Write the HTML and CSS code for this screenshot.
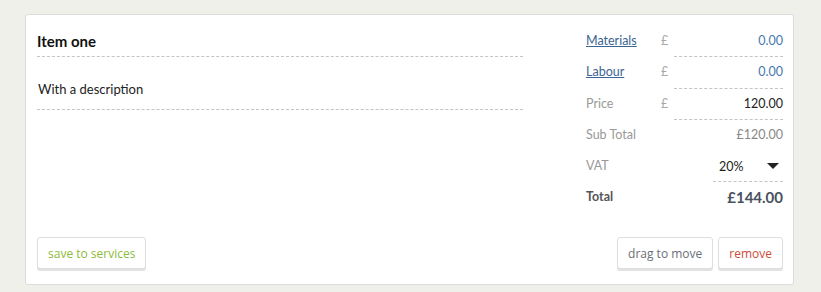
FILE: index.html
```html
<!DOCTYPE html>
<html lang="en">

<head>
  <meta charset="UTF-8" />
  <title>Line item</title>
  <link rel="stylesheet" href="styles.css">
</head>

<body>
  <div class="item">
    <div class="item-body">
      <!-- 左侧：名称和描述 -->
      <div class="details">
        <div class="title">Item one</div>
        <div class="desc">With a description</div>
      </div>
      <!-- 右侧：价格明细 -->
      <div class="costs">
        <div class="row">
          <a class="label link" href="#">Materials</a>
          <span class="cur">£</span>
          <span class="val input blue">0.00</span>
        </div>
        <div class="row">
          <a class="label link" href="#">Labour</a>
          <span class="cur">£</span>
          <span class="val input blue">0.00</span>
        </div>
        <div class="row">
          <span class="label">Price</span>
          <span class="cur">£</span>
          <span class="val input">120.00</span>
        </div>
        <div class="row">
          <span class="label">Sub Total</span>
          <span class="cur"></span>
          <span class="val grey">£120.00</span>
        </div>
        <div class="row">
          <span class="label">VAT</span>
          <span class="cur"></span>
          <span class="vat">
            <span class="vat-box">20%<i class="caret"></i></span>
          </span>
        </div>
        <div class="row">
          <span class="label total">Total</span>
          <span class="cur"></span>
          <span class="val sum">£144.00</span>
        </div>
      </div>
    </div>
    <div class="actions">
      <button class="btn green">save to services</button>
      <div class="right-btns">
        <button class="btn">drag to move</button>
        <button class="btn red">remove</button>
      </div>
    </div>
  </div>
</body>

</html>
```

FILE: styles.css
```css
* {
  margin: 0;
  padding: 0;
  box-sizing: border-box;
}

body {
  background: #f0f0eb;
  font-family: Lato, "Open Sans", sans-serif;
  font-size: 13px;
  color: #222;
}

.item {
  width: 769px;
  height: 271px;
  margin: 14px 0 0 25px;
  background: #fff;
  border: 1px solid #dcdcdc;
  border-radius: 3px;
  padding: 11px 10px 15px 11px;
  display: flex;
  flex-direction: column;
  justify-content: space-between;
}

.item-body {
  display: flex;
  justify-content: space-between;
}

.details {
  width: 486px;
}

.title {
  height: 31px;
  line-height: 30px;
  font-size: 15px;
  font-weight: bold;
  color: #111;
  border-bottom: 1px dashed #c4c4c4;
}

.desc {
  padding: 22px 0 10px 1px;
  line-height: 20px;
  border-bottom: 1px dashed #c4c4c4;
}

.costs {
  width: 197px;
}

.row {
  display: flex;
  height: 31.3px;
  align-items: stretch;
}

.label {
  width: 75px;
  line-height: 30px;
  font-size: 12.5px;
  color: #999;
}

.link {
  color: #3c6594;
  text-decoration: underline;
  align-self: flex-start;
}

.cur {
  width: 13px;
  line-height: 30px;
  color: #aaa;
  font-size: 12.5px;
}

.val {
  flex: 1;
  text-align: right;
  line-height: 30px;
  font-size: 12.5px;
}

.input {
  border-bottom: 1px dashed #c4c4c4;
}

.blue {
  color: #4a78ad;
}

.grey {
  color: #888;
}

.vat {
  flex: 1;
  display: flex;
  justify-content: flex-end;
}

.vat-box {
  width: 70px;
  display: flex;
  justify-content: space-between;
  align-items: center;
  padding: 0 4px 0 6px;
  border-bottom: 1px dashed #c4c4c4;
  font-size: 12.5px;
}

.caret {
  width: 0;
  height: 0;
  border-left: 6px solid transparent;
  border-right: 6px solid transparent;
  border-top: 6px solid #222;
}

.total {
  font-weight: bold;
  color: #555;
  font-size: 12.5px;
}

.sum {
  font-weight: bold;
  font-size: 15px;
  color: #4a5260;
}

.actions {
  display: flex;
  justify-content: space-between;
}

.right-btns {
  display: flex;
  gap: 5px;
}

.btn {
  height: 32px;
  padding: 0 10px;
  background: #fff;
  border: 1px solid #dedede;
  border-radius: 3px;
  box-shadow: 0 2px 0 #e2e2e4;
  font: 12px "Open Sans", sans-serif;
  color: #6a6f78;
  cursor: pointer;
}

.green {
  color: #8cbb3a;
}

.red {
  color: #cc4b37;
}
```
